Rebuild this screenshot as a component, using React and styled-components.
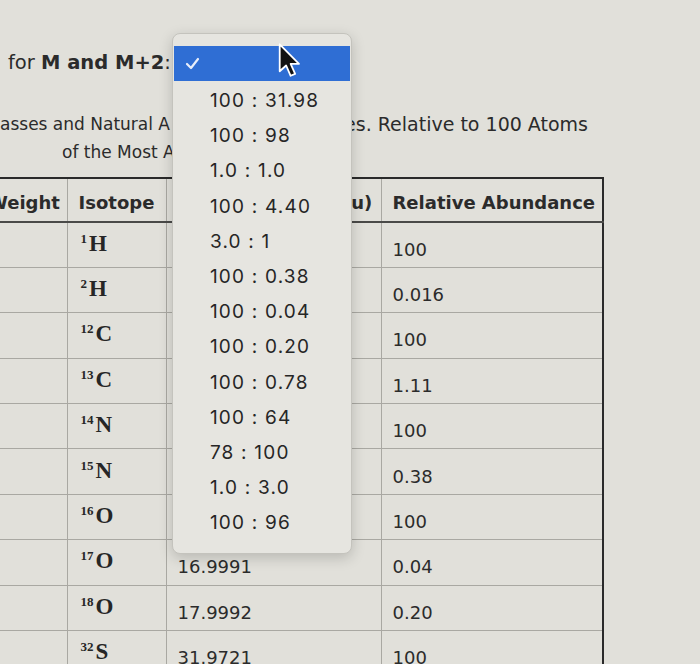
import React from 'react';
import styled, { createGlobalStyle } from 'styled-components';

const GlobalStyle = createGlobalStyle`
  html, body { margin: 0; padding: 0; background: #e1e0da; }
  body {
    font-family: "DejaVu Sans", Verdana, sans-serif;
    color: #2b2b2b;
    overflow: hidden;
  }
`;

const Page = styled.main`
  width: 700px;
  height: 664px;
  overflow: hidden;
  background: #e1e0da;
`;

const PromptRow = styled.div`
  display: flex;
  align-items: center;
  height: 34px;
  margin-top: 45px;
  padding-left: 8px;
  font-size: 19.5px;
  white-space: nowrap;
  b { font-weight: bold; }
`;

const SelectAnchor = styled.div`
  position: relative;
  width: 180px;
  height: 34px;
  margin-left: 1px;
`;

const Popup = styled.div`
  position: absolute;
  top: -12px;
  left: 0;
  width: 180px;
  box-sizing: border-box;
  padding: 12px 1px 15px;
  background: #e6e5e0;
  border: 1px solid #c4c3bd;
  border-radius: 8px;
  box-shadow: 0 4px 14px rgba(0, 0, 0, 0.18);
  font-family: Inter, "Liberation Sans", sans-serif;
  font-size: 19px;
  color: #262626;
  z-index: 2;
`;

const Option = styled.div`
  display: flex;
  align-items: center;
  height: ${p => (p.$selected ? 35 : 35.2)}px;
  padding-left: ${p => (p.$selected ? 10 : 36)}px;
  padding-top: ${p => (p.$selected ? 0 : 4)}px;
  box-sizing: border-box;
  background: ${p => (p.$selected ? '#2f6ed4' : 'transparent')};
  letter-spacing: 1.2px;
  white-space: pre;
`;

const Cursor = styled.svg`
  position: absolute;
  left: 104px;
  top: 9px;
  width: 26px;
  height: 36px;
`;

const Caption = styled.div`
  margin: 31px 0 11px;
  line-height: 28px;
  white-space: nowrap;
`;

const CaptionRow = styled.div`
  display: flex;
  width: 588px;
`;

const CaptionPart = styled.div`
  display: flex;
  justify-content: flex-end;
  overflow: hidden;
  box-sizing: border-box;
  flex: ${p => (p.$grow ? '1 1 auto' : `0 0 ${p.$w}px`)};
  padding-right: ${p => p.$gap || 0}px;
  font-size: ${p => p.$size}px;
  span { flex-shrink: 0; }
`;

const CaptionTail = styled.div`
  padding-left: 62px;
  font-size: 17px;
`;

const Table = styled.table`
  width: 627px;
  margin-left: -25px;
  table-layout: fixed;
  border-collapse: collapse;
  border: 2px solid #2a2a2a;
  font-size: 18px;
`;

const HeadCell = styled.th`
  box-sizing: border-box;
  height: 44px;
  padding: 5px 11px 0;
  text-align: left;
  font-weight: bold;
  font-size: 18px;
  border: 1px solid #a9a8a2;
  border-bottom: 2px solid #4a4a48;
  width: ${p => p.$w}px;
  white-space: nowrap;
  overflow: hidden;
`;

const Cell = styled.td`
  height: 45.4px;
  padding: 9px 11px 0;
  border: 1px solid #a9a8a2;
  box-sizing: border-box;
`;

const IsotopeCell = styled(Cell)`
  padding: 0 11px 2px 13px;
  font-family: "Liberation Serif", "Times New Roman", serif;
  font-weight: bold;
  font-size: 23px;
  color: #262626;
  sup { font-size: 13px; vertical-align: 8px; margin-right: 2px; }
`;

const options = [
  '100 : 31.98', '100 : 98', '1.0 : 1.0', '100 : 4.40', '3.0 : 1',
  '100 : 0.38', '100 : 0.04', '100 : 0.20', '100 : 0.78', '100 : 64',
  '78 : 100', '1.0 : 3.0', '100 : 96',
];

const isotopes = [
  [1, 'H', '1.00783', '100'],
  [2, 'H', '2.01410', '0.016'],
  [12, 'C', '12.0000', '100'],
  [13, 'C', '13.0034', '1.11'],
  [14, 'N', '14.0031', '100'],
  [15, 'N', '15.0001', '0.38'],
  [16, 'O', '15.9949', '100'],
  [17, 'O', '16.9991', '0.04'],
  [18, 'O', '17.9992', '0.20'],
  [32, 'S', '31.9721', '100'],
  [33, 'S', '32.9715', '0.78'],
];

const RatioMenu = () => (
  <Popup>
    <Option $selected>
      <svg width="18" height="16" viewBox="0 0 18 16">
        <polyline points="3,8 7,12 14,3" fill="none" stroke="#e8eefa" strokeWidth="2.2" strokeLinecap="round" strokeLinejoin="round" />
      </svg>
    </Option>
    {options.map(o => <Option key={o}>{o}</Option>)}
    <Cursor viewBox="0 0 20 28">
      <path d="M2 1 L2 22 L7 17.5 L10.5 25.5 L14 24 L10.5 16.2 L17 16.2 Z" fill="#111" stroke="#fff" strokeWidth="1.4" strokeLinejoin="round" />
    </Cursor>
  </Popup>
);

export default function App() {
  return (
    <Page>
      <GlobalStyle />
      <PromptRow>
        for&nbsp;<b>M and M+2</b>:
        <SelectAnchor>
          <RatioMenu />
        </SelectAnchor>
      </PromptRow>
      <Caption>
        <CaptionRow>
          <CaptionPart $w={174} $gap={4} $size={17}>
            <span>Table 1. Exact Masses and Natural A</span>
          </CaptionPart>
          <CaptionPart $grow $size={19}>
            <span>bundances of Isotopes. Relative to 100 Atoms</span>
          </CaptionPart>
        </CaptionRow>
        <CaptionTail>of the Most Abundant Isotope</CaptionTail>
      </Caption>
      <Table>
        <thead>
          <tr>
            <HeadCell $w={91}>Weight</HeadCell>
            <HeadCell $w={99}>Isotope</HeadCell>
            <HeadCell $w={215}>Atomic Mass (amu)</HeadCell>
            <HeadCell $w={222}>Relative Abundance</HeadCell>
          </tr>
        </thead>
        <tbody>
          {isotopes.map(([m, el, mass, ab]) => (
            <tr key={m}>
              <Cell />
              <IsotopeCell><sup>{m}</sup>{el}</IsotopeCell>
              <Cell>{mass}</Cell>
              <Cell>{ab}</Cell>
            </tr>
          ))}
        </tbody>
      </Table>
    </Page>
  );
}
